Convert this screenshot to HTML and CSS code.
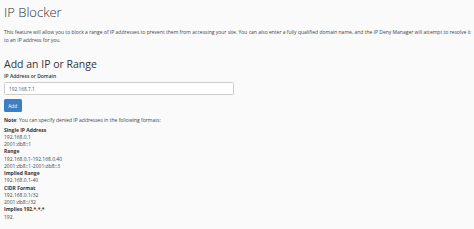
FILE: index.html
```html
<!DOCTYPE html>
<html>
<head>
    <meta charset="UTF-8">
    <meta name="viewport" content="width=device-width, initial-scale=1.0">
    <title>IP Blocker</title>
    <link rel="stylesheet" href="styles.css">
</head>
<body>
    <h1>IP Blocker</h1>
    <p class="intro">This feature will allow you to block a range of IP addresses to prevent them from accessing your site. You can also enter a fully qualified domain name, and the IP Deny Manager will attempt to resolve it to an IP address for you.</p>

    <h2>Add an IP or Range</h2>
    <form class="add-form" onsubmit="return false;">
        <label for="ip">IP Address or Domain</label>
        <input type="text" id="ip" class="field" value="192.168.7.1">
        <button type="submit" class="btn-primary">Add</button>
    </form>

    <p class="note"><strong>Note</strong>: You can specify denied IP addresses in the following formats:</p>
    <dl class="formats">
        <dt>Single IP Address</dt>
        <dd>192.168.0.1</dd>
        <dd>2001:db8::1</dd>
        <dt>Range</dt>
        <dd>192.168.0.1-192.168.0.40</dd>
        <dd>2001:db8::1-2001:db8::3</dd>
        <dt>Implied Range</dt>
        <dd>192.168.0.1-40</dd>
        <dt>CIDR Format</dt>
        <dd>192.168.0.1/32</dd>
        <dd>2001:db8::/32</dd>
        <dt>Implies 192.*.*.*</dt>
        <dd>192.</dd>
    </dl>
</body>
</html>
```

FILE: styles.css
```css
* {
    box-sizing: border-box;
}

body {
    margin: 0;
    padding: 0 1px 0 4px;
    background: #fafafa;
    color: #444;
    font-family: "Open Sans", Arial, sans-serif;
    font-size: 5px;
    line-height: 7.25px;
}

h1 {
    margin: 5px 0 0;
    font-size: 13px;
    line-height: 15.4px;
    font-weight: 300;
    color: #333;
}

.intro {
    margin: 9px 0 0;
    line-height: 7.5px;
}

h2 {
    margin: 14px 0 0;
    font-size: 10.5px;
    line-height: 12px;
    font-weight: 400;
    color: #333;
}

.add-form {
    display: flex;
    flex-direction: column;
    align-items: flex-start;
}

.add-form label {
    margin-top: 3px;
    font-weight: 600;
    color: #333;
}

.field {
    margin-top: 1.6px;
    width: 230px;
    height: 13px;
    padding: 0 4px;
    border: 1px solid #ccc;
    border-radius: 1.5px;
    background: #fff;
    color: #555;
    font-family: inherit;
    font-size: 4.8px;
    outline: none;
}

.btn-primary {
    margin-top: 4px;
    width: 17.5px;
    height: 13px;
    padding: 0;
    border: none;
    border-radius: 1.5px;
    background: #3b80c4;
    color: #fff;
    font-family: inherit;
    font-size: 4.8px;
    cursor: pointer;
}

.note {
    margin: 4.7px 0 0;
}

.note strong,
.formats dt {
    font-weight: 700;
    color: #333;
}

.formats {
    margin: 2.5px 0 0;
}

.formats dd {
    margin: 0;
}
```
